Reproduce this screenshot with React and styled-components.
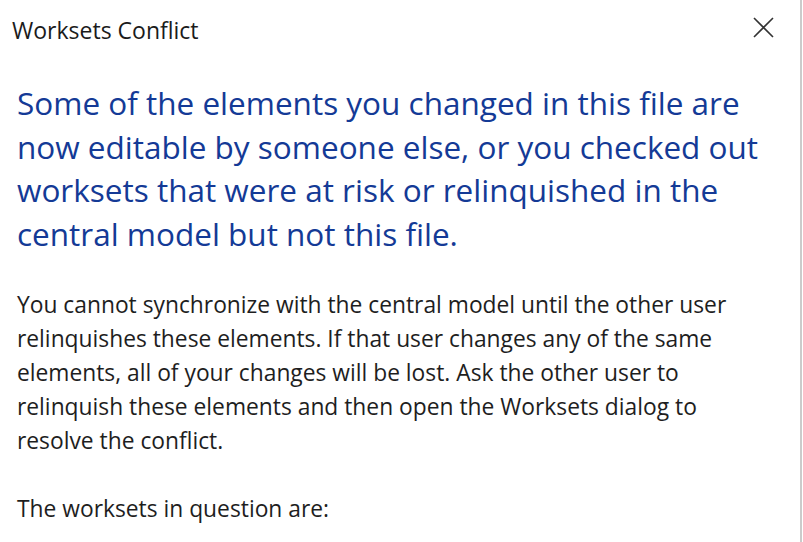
import styled, { createGlobalStyle } from "styled-components";

const Global = createGlobalStyle`
  html, body {
    margin: 0;
    padding: 0;
    background: #ffffff;
  }
  body {
    font-family: "Open Sans", "Noto Sans", sans-serif;
  }
`;

const Dialog = styled.div`
  width: 800px;
  height: 542px;
  border-right: 2px solid #cbcbcb;
  box-sizing: content-box;
  background: #ffffff;
  overflow: hidden;
`;

const TitleBar = styled.div`
  display: flex;
  align-items: center;
  justify-content: space-between;
  height: 58px;
  padding: 0 26px 0 12px;
  box-sizing: border-box;
`;

const Title = styled.div`
  font-size: 23px;
  color: #1b1b1b;
  margin-top: 2px;
`;

const Close = styled.button`
  border: 0;
  background: none;
  padding: 0;
  width: 22px;
  height: 22px;
  margin-top: -3px;
  display: flex;
  align-items: center;
  justify-content: center;
  cursor: pointer;
`;

const Content = styled.div`
  padding: 23px 20px 0 17px;
`;

const Instruction = styled.div`
  font-size: 31.5px;
  line-height: 43.5px;
  color: #143a96;
  margin-bottom: 33px;
  white-space: nowrap;
`;

const Para = styled.p`
  margin: 0 0 34px;
  font-size: 22.8px;
  line-height: 34px;
  color: #1e1e1e;
  white-space: nowrap;
`;

export default function App() {
  return (
    <>
      <Global />
      <Dialog>
        <TitleBar>
          <Title>Worksets Conflict</Title>
          <Close aria-label="Close">
            <svg width="21" height="21" viewBox="0 0 21 21">
              <path d="M1 1 L20 20 M20 1 L1 20" stroke="#333" strokeWidth="1.6" fill="none" />
            </svg>
          </Close>
        </TitleBar>
        <Content>
          <Instruction>
            Some of the elements you changed in this file are
            <br />
            now editable by someone else, or you checked out
            <br />
            worksets that were at risk or relinquished in the
            <br />
            central model but not this file.
          </Instruction>
          <Para>
            You cannot synchronize with the central model until the other user
            <br />
            relinquishes these elements. If that user changes any of the same
            <br />
            elements, all of your changes will be lost. Ask the other user to
            <br />
            relinquish these elements and then open the Worksets dialog to
            <br />
            resolve the conflict.
          </Para>
          <Para>The worksets in question are:</Para>
        </Content>
      </Dialog>
    </>
  );
}
